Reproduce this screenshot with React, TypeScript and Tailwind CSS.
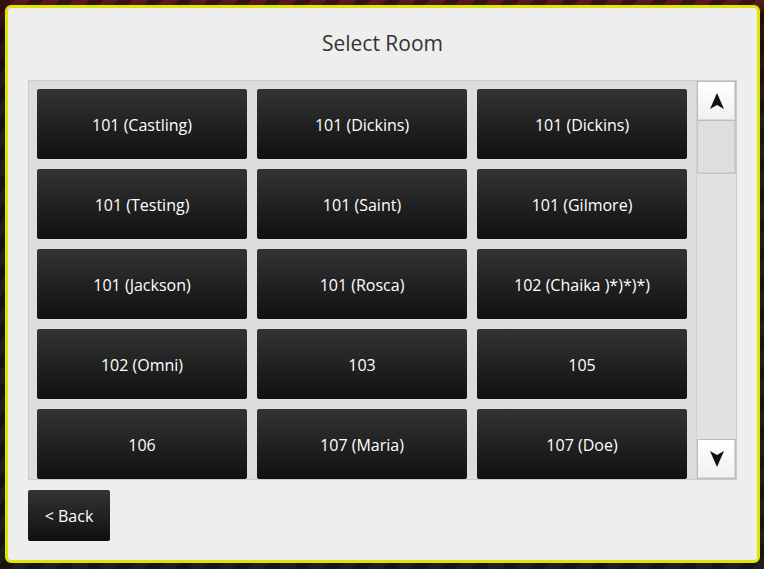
import { useState } from 'react'

const ROOMS = [
  '101 (Castling)', '101 (Dickins)', '101 (Dickins)',
  '101 (Testing)', '101 (Saint)', '101 (Gilmore)',
  '101 (Jackson)', '101 (Rosca)', '102 (Chaika )*)*)*)',
  '102 (Omni)', '103', '105',
  '106', '107 (Maria)', '107 (Doe)',
]

function Arrow({ down }: { down?: boolean }) {
  return (
    <svg width="14" height="16" viewBox="0 0 14 16" className={down ? 'rotate-180' : ''}>
      <path d="M7 0 L14 16 L7 12 L0 16 Z" fill="#111" />
    </svg>
  )
}

export default function App() {
  const [picked, setPicked] = useState<number | null>(null)

  return (
    <div className="w-[764px] h-[569px] p-[5px] pr-[4px] pb-[6px] bg-[repeating-linear-gradient(135deg,rgba(0,0,0,0.35)_0_10px,transparent_10px_21px),linear-gradient(to_bottom,#5a1a1a_0%,#2a0f0f_4%,#1e1e1e_20%,#1e1e1e_100%)] font-['Open_Sans',sans-serif]">
      <div className="h-full flex flex-col rounded-[6px] border-[3px] border-[#dfe400] bg-[#eeeeee] px-[20px]">

        {/* Заголовок */}
        <div className="h-[72px] shrink-0 flex items-center justify-center text-[21px] text-[#333]">
          Select Room
        </div>

        {/* Список комнат */}
        <div className="h-[400px] shrink-0 flex border border-[#cccccc] bg-[#dddddd] overflow-hidden">
          <div className="flex-1 overflow-hidden p-[8px]">
            <div className="grid grid-cols-[210px_210px_210px] gap-x-[10px] gap-y-[10px]">
              {ROOMS.map((r, i) => (
                <button
                  key={i}
                  onClick={() => setPicked(i)}
                  className={`h-[70px] pt-[2px] rounded-[2px] text-[16px] text-white bg-gradient-to-b from-[#343434] to-[#101010] ${picked === i ? 'ring-2 ring-[#dfe400]' : ''}`}
                >
                  {r}
                </button>
              ))}
            </div>
          </div>

          {/* Скроллбар */}
          <div className="w-[40px] shrink-0 flex flex-col bg-[#e2e2e2] border-l border-[#d0d0d0]">
            <button className="h-[40px] shrink-0 flex items-center justify-center bg-gradient-to-b from-white to-[#f0f0f0] border border-[#bdbdbd] shadow-[inset_-1px_-1px_0_#d8d8d8]">
              <Arrow />
            </button>
            <div className="h-[53px] shrink-0 bg-[#dedede] border border-[#c4c4c4] border-t-0 shadow-[inset_-1px_-1px_0_#cfcfcf]" />
            <div className="flex-1" />
            <button className="h-[40px] shrink-0 flex items-center justify-center bg-gradient-to-b from-white to-[#f0f0f0] border border-[#bdbdbd] shadow-[inset_-1px_-1px_0_#d8d8d8]">
              <Arrow down />
            </button>
          </div>
        </div>

        <div className="mt-[10px]">
          <button className="w-[82px] h-[51px] rounded-[2px] text-[16px] text-white bg-gradient-to-b from-[#343434] to-[#101010]">
            &lt; Back
          </button>
        </div>
      </div>
    </div>
  )
}
